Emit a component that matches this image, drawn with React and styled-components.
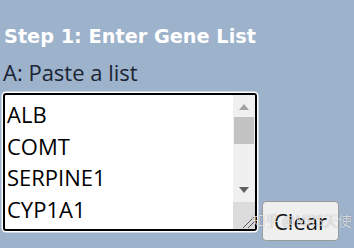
import React from "react";
import styled, { createGlobalStyle } from "styled-components";

const Global = createGlobalStyle`
  html, body { margin: 0; padding: 0; }
  body {
    background: #9db2cb;
    width: 354px;
    height: 248px;
    overflow: hidden;
    font-family: "Open Sans", "Noto Sans", sans-serif;
  }
`;

const Page = styled.div`
  position: relative;
  display: flex;
  flex-direction: column;
  padding: 26px 0 0 0;
  height: 248px;
  box-sizing: border-box;
`;

const Heading = styled.h3`
  margin: 0 0 0 4px;
  font-family: "DejaVu Sans", Verdana, sans-serif;
  font-weight: bold;
  font-size: 19.3px;
  line-height: 22px;
  color: #ffffff;
`;

const Label = styled.div`
  margin: 9px 0 0 3px;
  font-size: 22px;
  line-height: 30px;
  color: #1b2433;
`;

const Row = styled.div`
  display: flex;
  align-items: flex-start;
  gap: 5px;
  margin-top: 6px;
  padding-left: 3px;
`;

const Box = styled.div`
  display: flex;
  width: 254px;
  height: 138px;
  box-sizing: border-box;
  border: 2px solid #000;
  border-radius: 3px;
  box-shadow: 0 0 0 1.5px #ffffff;
  background: #fff;
  overflow: hidden;
`;

const Lines = styled.div`
  flex: 1;
  padding: 4px 0 0 2px;
  font-size: 22px;
  line-height: 31.5px;
  color: #000;
  white-space: pre;
`;

const ScrollBar = styled.div`
  width: 22px;
  display: flex;
  flex-direction: column;
  background: #f0f0f0;
`;

const ArrowBtn = styled.div`
  height: 21px;
  display: flex;
  align-items: ${(p) => (p.$down ? "flex-start" : "flex-end")};
  justify-content: center;
  padding: ${(p) => (p.$down ? "6px 0 0" : "0 0 6px")};
  box-sizing: border-box;
`;

const Track = styled.div`
  flex: 1;
  padding-top: 1px;
`;

const Thumb = styled.div`
  height: 27px;
  margin: 0 1px;
  background: #c2c2c2;
`;

const Corner = styled.div`
  height: 27px;
  background: #dcdcdc;
  display: flex;
  align-items: flex-end;
  justify-content: flex-end;
`;

const ClearButton = styled.button`
  margin-top: 108px;
  width: 77px;
  height: 40px;
  padding: 0;
  font-family: "Open Sans", "Noto Sans", sans-serif;
  font-size: 22px;
  color: #111;
  background: #efefef;
  border: 1px solid #9a9a9a;
  border-radius: 4px;
`;

const Watermark = styled.div`
  position: absolute;
  left: 251px;
  top: 210px;
  white-space: nowrap;
  font-family: "Noto Sans CJK SC", "Noto Sans", sans-serif;
  font-size: 14px;
  line-height: 20px;
  color: rgba(255, 255, 255, 0.7);
  text-shadow: 0 0 1px rgba(0, 0, 0, 0.35);
  pointer-events: none;
`;

const genes = ["ALB", "COMT", "SERPINE1", "CYP1A1"];

export default function App() {
  return (
    <>
      <Global />
      <Page>
        <Heading>Step 1: Enter Gene List</Heading>
        <Label>A: Paste a list</Label>
        <Row>
          <Box>
            <Lines>
              {genes.map((g) => (
                <div key={g}>{g}</div>
              ))}
            </Lines>
            <ScrollBar>
              <ArrowBtn>
                <svg width="10" height="6" viewBox="0 0 10 6">
                  <path d="M0 6 L5 0 L10 6 Z" fill="#a3a3a3" />
                </svg>
              </ArrowBtn>
              <Track>
                <Thumb />
              </Track>
              <ArrowBtn $down>
                <svg width="10" height="6" viewBox="0 0 10 6">
                  <path d="M0 0 L10 0 L5 6 Z" fill="#606060" />
                </svg>
              </ArrowBtn>
              <Corner>
                <svg width="14" height="14" viewBox="0 0 14 14">
                  <path d="M2 13 L13 2 M7 13 L13 7" stroke="#555" strokeWidth="1" />
                </svg>
              </Corner>
            </ScrollBar>
          </Box>
          <ClearButton>Clear</ClearButton>
        </Row>
        <Watermark>知乎 @MRS天使</Watermark>
      </Page>
    </>
  );
}
